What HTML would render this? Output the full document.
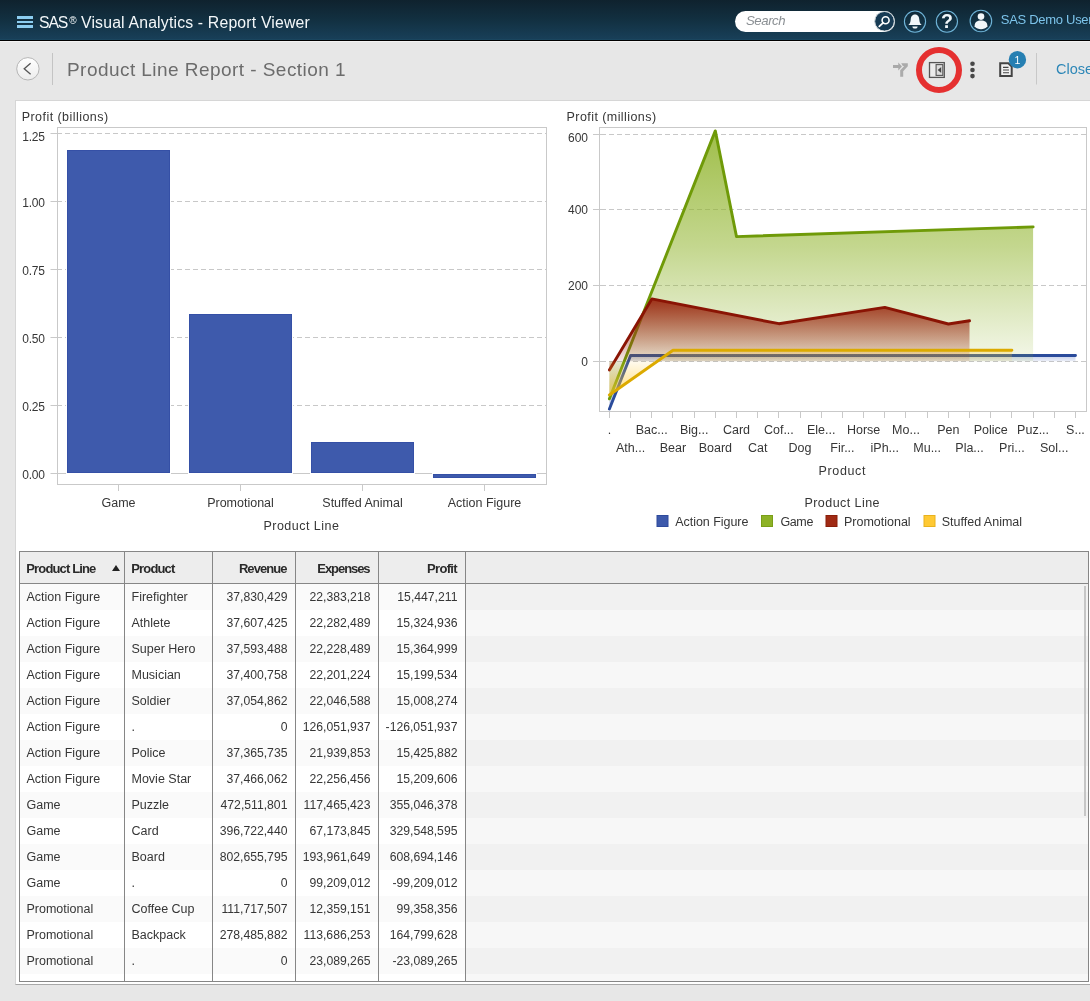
<!DOCTYPE html>
<html><head><meta charset="utf-8"><title>SAS Visual Analytics - Report Viewer</title>
<style>
html,body{margin:0;padding:0;}
body{width:1090px;height:1001px;overflow:hidden;background:#e7e7e7;position:relative;font-family:"Liberation Sans",sans-serif;}
.t{position:absolute;white-space:pre;line-height:1;font-family:"Liberation Sans",sans-serif;}
.a{position:absolute;}
svg{position:absolute;left:0;top:0;overflow:visible;}
#root{position:absolute;left:0;top:0;width:1090px;height:1001px;will-change:transform;}
</style></head><body><div id="root">

<div class="a" style="left:0;top:0;width:1090px;height:40px;background:linear-gradient(#0f222e 0%,#123041 50%,#183f58 97%,#1b4a63 100%);"></div>
<div class="a" style="left:0;top:40px;width:1090px;height:1px;background:#000;"></div><div class="a" style="left:0;top:41px;width:1090px;height:1px;background:#f3f3f3;z-index:1;"></div>
<div class="a" style="left:0;top:41px;width:1090px;height:59px;background:#e7e7e7;"></div>
<div class="a" style="left:17px;top:16px;width:16px;height:2.5px;background:#8ccdf0;"></div>
<div class="a" style="left:17px;top:20.5px;width:16px;height:2.5px;background:#8ccdf0;"></div>
<div class="a" style="left:17px;top:25px;width:16px;height:2.5px;background:#8ccdf0;"></div>
<div class="t" style="left:39.00px;top:14.53px;font-size:15.8px;color:#f4f8fa;letter-spacing:-1.139px;">SAS</div>
<div class="t" style="left:69.20px;top:15.83px;font-size:10px;color:#f4f8fa;">®</div>
<div class="t" style="left:81.00px;top:14.53px;font-size:15.8px;color:#f4f8fa;letter-spacing:0.176px;">Visual Analytics - Report Viewer</div>
<div class="a" style="left:735px;top:11px;width:160px;height:21px;border-radius:11px;background:#fff;"></div>
<div class="t" style="left:746.00px;top:14.43px;font-size:13.2px;color:#8a8f93;letter-spacing:-0.437px;font-style:italic;">Search</div>
<svg width="1090" height="1001" viewBox="0 0 1090 1001">
<circle cx="884.5" cy="21.3" r="9.8" fill="#173b54" stroke="#cfd6da" stroke-width="1"/>
<circle cx="885.6" cy="20.2" r="3.5" fill="none" stroke="#fff" stroke-width="1.6"/>
<line x1="883" y1="22.8" x2="879.3" y2="26.4" stroke="#fff" stroke-width="1.8" stroke-linecap="round"/>
<circle cx="915" cy="21.6" r="10.6" fill="none" stroke="#6fb4d8" stroke-width="1.1"/>
<path d="M915 14.600 c-3 0 -4.100 2.400 -4.300 5 c-0.200 2.600 -0.700 4.100 -2.400 5.500 h13.400 c-1.700 -1.400 -2.200 -2.900 -2.400 -5.500 c-0.200 -2.600 -1.300 -5 -4.300 -5 z" fill="#f2f7fa"/>
<path d="M912.300 26.400 h5.400 c-0.300 1.500 -1.300 2.200 -2.700 2.200 s-2.400 -0.700 -2.700 -2.200 z" fill="#f2f7fa"/>
<circle cx="946.9" cy="21.6" r="10.6" fill="none" stroke="#6fb4d8" stroke-width="1.1"/>
<circle cx="980.9" cy="21" r="10.8" fill="none" stroke="#6fb4d8" stroke-width="1.1"/>
<circle cx="981" cy="16.6" r="3.3" fill="#f2f7fa"/>
<path d="M974.6 26.2 c0 -4 2.6 -5.6 6.4 -5.6 s6.4 1.6 6.4 5.6 c-1.6 2.2 -4 3 -6.4 3 s-4.800 -0.800 -6.400 -3 z" fill="#f2f7fa"/>
</svg>
<div class="t" style="left:940.94px;top:11.79px;font-size:19.5px;color:#f2f7fa;font-weight:bold;">?</div>
<div class="t" style="left:1000.80px;top:13.10px;font-size:13px;color:#7cc3ea;letter-spacing:-0.297px;">SAS Demo User</div>
<svg width="1090" height="1001" viewBox="0 0 1090 1001">
<defs><linearGradient id="bk" x1="0" y1="0" x2="0" y2="1"><stop offset="0" stop-color="#ffffff"/><stop offset="1" stop-color="#ececec"/></linearGradient></defs>
<circle cx="27.9" cy="68.8" r="11.2" fill="url(#bk)" stroke="#b4b4b4" stroke-width="1"/>
<path d="M30.6 63.3 L24.2 68.8 L30.6 74.3" fill="none" stroke="#555" stroke-width="1.3"/>
<line x1="52.5" y1="53" x2="52.500" y2="85" stroke="#c4c4c4" stroke-width="1"/>
<!-- filter-arrow icon -->
<path d="M893 65 H898.300 V62.500 L902 66.500 L898.300 70.500 V68 H893 Z" fill="#a9a9a9"/>
<path d="M901.200 63.200 H907.800 V66.200 L903.200 71.300 V76.800 H900.200 V70.300 L904.200 66 H902.800 Z" fill="#ababab"/>
<!-- red highlight circle -->
<circle cx="939" cy="70" r="20" fill="none" stroke="#e53030" stroke-width="6"/>
<!-- panel icon -->
<rect x="929.500" y="62.600" width="14.800" height="14.800" fill="#ececec" stroke="#555" stroke-width="1.300"/>
<rect x="936.100" y="64.600" width="6.700" height="10.800" fill="#dcdcdc" stroke="#555" stroke-width="1.100"/>
<path d="M941.200 67.100 L937.700 70 L941.200 72.900 Z" fill="#444"/>
<!-- dots -->
<circle cx="972.500" cy="63.800" r="2.300" fill="#484848"/><circle cx="972.500" cy="70" r="2.300" fill="#484848"/><circle cx="972.500" cy="76.100" r="2.300" fill="#484848"/>
<!-- doc icon -->
<path d="M1000.200 63.300 H1008.300 L1011.700 66.500 V76 H1000.200 Z" fill="#f2f2f2" stroke="#444" stroke-width="2"/>
<path d="M1003 67.400 H1008.500 M1003 70 H1009 M1003 72.700 H1009" stroke="#444" stroke-width="1.100"/>
<circle cx="1017.400" cy="59.700" r="8.700" fill="#267fb2"/>
<line x1="1036.500" y1="53" x2="1036.500" y2="84.500" stroke="#c8c8c8" stroke-width="1"/>
</svg>
<div class="t" style="left:1014.38px;top:54.81px;font-size:10.5px;color:#fff;">1</div>
<div class="t" style="left:67.00px;top:59.62px;font-size:19px;color:#6c6c6c;letter-spacing:0.449px;">Product Line Report - Section 1</div>
<div class="t" style="left:1056.00px;top:62.43px;font-size:14.5px;color:#2d87b7;">Close</div>
<div class="a" style="left:15px;top:100px;width:1080px;height:885px;background:#fff;border:1px solid #d6d6d6;border-bottom-color:#a8a8a8;box-sizing:border-box;"></div>
<div class="t" style="left:21.70px;top:111.32px;font-size:12.5px;color:#363636;letter-spacing:0.448px;">Profit (billions)</div>
<svg width="1090" height="1001" viewBox="0 0 1090 1001" shape-rendering="auto">
<rect x="57.5" y="127.5" width="489" height="357" fill="#fff" stroke="#c9c9c9" stroke-width="1"/>
<line x1="50.5" y1="133.5" x2="61" y2="133.5" stroke="#c9c9c9" stroke-width="1"/>
<line x1="57" y1="133.5" x2="546" y2="133.5" stroke="#c8c8c8" stroke-width="1" stroke-dasharray="5 3"/>
<line x1="50.5" y1="201.5" x2="61" y2="201.5" stroke="#c9c9c9" stroke-width="1"/>
<line x1="57" y1="201.5" x2="546" y2="201.5" stroke="#c8c8c8" stroke-width="1" stroke-dasharray="5 3"/>
<line x1="50.5" y1="269.5" x2="61" y2="269.5" stroke="#c9c9c9" stroke-width="1"/>
<line x1="57" y1="269.5" x2="546" y2="269.5" stroke="#c8c8c8" stroke-width="1" stroke-dasharray="5 3"/>
<line x1="50.5" y1="337.5" x2="61" y2="337.5" stroke="#c9c9c9" stroke-width="1"/>
<line x1="57" y1="337.5" x2="546" y2="337.5" stroke="#c8c8c8" stroke-width="1" stroke-dasharray="5 3"/>
<line x1="50.5" y1="405.5" x2="61" y2="405.5" stroke="#c9c9c9" stroke-width="1"/>
<line x1="57" y1="405.5" x2="546" y2="405.5" stroke="#c8c8c8" stroke-width="1" stroke-dasharray="5 3"/>
<line x1="50.5" y1="473.5" x2="61" y2="473.5" stroke="#c9c9c9" stroke-width="1"/>
<line x1="57" y1="473.5" x2="546" y2="473.5" stroke="#c9c9c9" stroke-width="1"/>
<rect x="66" y="149" width="105" height="325" fill="#fff"/>
<rect x="67.5" y="150.5" width="102" height="322" fill="#3e5aac" stroke="#3550a6" stroke-width="1"/>
<rect x="188" y="313" width="105" height="161" fill="#fff"/>
<rect x="189.5" y="314.5" width="102" height="158" fill="#3e5aac" stroke="#3550a6" stroke-width="1"/>
<rect x="310" y="441" width="105" height="33" fill="#fff"/>
<rect x="311.5" y="442.5" width="102" height="30" fill="#3e5aac" stroke="#3550a6" stroke-width="1"/>
<rect x="432" y="473" width="105" height="6" fill="#fff"/>
<rect x="433.5" y="474.5" width="102" height="3" fill="#3e5aac" stroke="#3550a6" stroke-width="1"/>
<line x1="118.5" y1="484" x2="118.5" y2="491" stroke="#c9c9c9" stroke-width="1"/>
<line x1="240.5" y1="484" x2="240.5" y2="491" stroke="#c9c9c9" stroke-width="1"/>
<line x1="362.5" y1="484" x2="362.5" y2="491" stroke="#c9c9c9" stroke-width="1"/>
<line x1="484.5" y1="484" x2="484.5" y2="491" stroke="#c9c9c9" stroke-width="1"/>
</svg>
<div class="t" style="left:22.21px;top:131.04px;font-size:12px;color:#363636;letter-spacing:-0.189px;">1.25</div>
<div class="t" style="left:22.21px;top:196.64px;font-size:12px;color:#363636;letter-spacing:-0.189px;">1.00</div>
<div class="t" style="left:22.21px;top:264.64px;font-size:12px;color:#363636;letter-spacing:-0.189px;">0.75</div>
<div class="t" style="left:22.21px;top:332.64px;font-size:12px;color:#363636;letter-spacing:-0.189px;">0.50</div>
<div class="t" style="left:22.21px;top:400.64px;font-size:12px;color:#363636;letter-spacing:-0.189px;">0.25</div>
<div class="t" style="left:22.21px;top:468.64px;font-size:12px;color:#363636;letter-spacing:-0.189px;">0.00</div>
<div class="t" style="left:101.48px;top:497.32px;font-size:12.5px;color:#363636;">Game</div>
<div class="t" style="left:207.15px;top:497.32px;font-size:12.5px;color:#363636;">Promotional</div>
<div class="t" style="left:322.31px;top:497.32px;font-size:12.5px;color:#363636;">Stuffed Animal</div>
<div class="t" style="left:447.68px;top:497.32px;font-size:12.5px;color:#363636;">Action Figure</div>
<div class="t" style="left:263.44px;top:520.32px;font-size:12.5px;color:#363636;letter-spacing:0.485px;">Product Line</div>
<div class="t" style="left:566.60px;top:111.32px;font-size:12.5px;color:#363636;letter-spacing:0.427px;">Profit (millions)</div>
<svg width="1090" height="1001" viewBox="0 0 1090 1001">
<defs>
<clipPath id="cp2"><rect x="600" y="128" width="486" height="283"/></clipPath>
<linearGradient id="g_blue" gradientUnits="userSpaceOnUse" x1="0" y1="355.5" x2="0" y2="409.0"><stop offset="0" stop-color="#3d5db5" stop-opacity="0.3"/><stop offset="0.1083" stop-color="#3d5db5" stop-opacity="0.1"/><stop offset="1" stop-color="#3d5db5" stop-opacity="0.35"/></linearGradient>
<linearGradient id="g_green" gradientUnits="userSpaceOnUse" x1="0" y1="130.9" x2="0" y2="398.8"><stop offset="0" stop-color="#8fb32a" stop-opacity="0.85"/><stop offset="0.4299" stop-color="#8fb32a" stop-opacity="0.53"/><stop offset="0.8599" stop-color="#8fb32a" stop-opacity="0.1"/><stop offset="1" stop-color="#8fb32a" stop-opacity="0.3"/></linearGradient>
<linearGradient id="g_red" gradientUnits="userSpaceOnUse" x1="0" y1="298.9" x2="0" y2="370.0"><stop offset="0" stop-color="#9c2c14" stop-opacity="0.97"/><stop offset="0.8771" stop-color="#9c2c14" stop-opacity="0.1"/><stop offset="1" stop-color="#9c2c14" stop-opacity="0.45"/></linearGradient>
<linearGradient id="g_yellow" gradientUnits="userSpaceOnUse" x1="0" y1="350.3" x2="0" y2="395.0"><stop offset="0" stop-color="#ffc933" stop-opacity="0.34"/><stop offset="0.2458" stop-color="#ffc933" stop-opacity="0.08"/><stop offset="1" stop-color="#ffc933" stop-opacity="0.65"/></linearGradient>
</defs>
<rect x="599.5" y="127.5" width="487" height="284" fill="#fff" stroke="#c9c9c9" stroke-width="1"/>
<line x1="593" y1="134.5" x2="603" y2="134.5" stroke="#c9c9c9" stroke-width="1"/>
<line x1="601" y1="134.5" x2="1086" y2="134.5" stroke="#c8c8c8" stroke-width="1" stroke-dasharray="5 3"/>
<line x1="593" y1="209.5" x2="603" y2="209.5" stroke="#c9c9c9" stroke-width="1"/>
<line x1="601" y1="209.5" x2="1086" y2="209.5" stroke="#c8c8c8" stroke-width="1" stroke-dasharray="5 3"/>
<line x1="593" y1="285.5" x2="603" y2="285.5" stroke="#c9c9c9" stroke-width="1"/>
<line x1="601" y1="285.5" x2="1086" y2="285.5" stroke="#c8c8c8" stroke-width="1" stroke-dasharray="5 3"/>
<line x1="593" y1="361.5" x2="603" y2="361.5" stroke="#c9c9c9" stroke-width="1"/>
<line x1="601" y1="361.5" x2="1086" y2="361.5" stroke="#c8c8c8" stroke-width="1" stroke-dasharray="5 3"/>
<line x1="609.5" y1="411" x2="609.5" y2="418" stroke="#c9c9c9" stroke-width="1"/>
<line x1="630.5" y1="411" x2="630.5" y2="418" stroke="#c9c9c9" stroke-width="1"/>
<line x1="651.5" y1="411" x2="651.5" y2="418" stroke="#c9c9c9" stroke-width="1"/>
<line x1="672.5" y1="411" x2="672.5" y2="418" stroke="#c9c9c9" stroke-width="1"/>
<line x1="694.5" y1="411" x2="694.5" y2="418" stroke="#c9c9c9" stroke-width="1"/>
<line x1="715.5" y1="411" x2="715.5" y2="418" stroke="#c9c9c9" stroke-width="1"/>
<line x1="736.5" y1="411" x2="736.5" y2="418" stroke="#c9c9c9" stroke-width="1"/>
<line x1="757.5" y1="411" x2="757.5" y2="418" stroke="#c9c9c9" stroke-width="1"/>
<line x1="778.5" y1="411" x2="778.5" y2="418" stroke="#c9c9c9" stroke-width="1"/>
<line x1="800.5" y1="411" x2="800.5" y2="418" stroke="#c9c9c9" stroke-width="1"/>
<line x1="821.5" y1="411" x2="821.5" y2="418" stroke="#c9c9c9" stroke-width="1"/>
<line x1="842.5" y1="411" x2="842.5" y2="418" stroke="#c9c9c9" stroke-width="1"/>
<line x1="863.5" y1="411" x2="863.5" y2="418" stroke="#c9c9c9" stroke-width="1"/>
<line x1="884.5" y1="411" x2="884.5" y2="418" stroke="#c9c9c9" stroke-width="1"/>
<line x1="905.5" y1="411" x2="905.5" y2="418" stroke="#c9c9c9" stroke-width="1"/>
<line x1="927.5" y1="411" x2="927.5" y2="418" stroke="#c9c9c9" stroke-width="1"/>
<line x1="948.5" y1="411" x2="948.5" y2="418" stroke="#c9c9c9" stroke-width="1"/>
<line x1="969.5" y1="411" x2="969.5" y2="418" stroke="#c9c9c9" stroke-width="1"/>
<line x1="990.5" y1="411" x2="990.5" y2="418" stroke="#c9c9c9" stroke-width="1"/>
<line x1="1011.5" y1="411" x2="1011.5" y2="418" stroke="#c9c9c9" stroke-width="1"/>
<line x1="1033.5" y1="411" x2="1033.5" y2="418" stroke="#c9c9c9" stroke-width="1"/>
<line x1="1054.5" y1="411" x2="1054.5" y2="418" stroke="#c9c9c9" stroke-width="1"/>
<line x1="1075.5" y1="411" x2="1075.5" y2="418" stroke="#c9c9c9" stroke-width="1"/>
<path d="M609.4 409.0 L630.6 355.5 L1075.5 355.5 L1075.5 361.3 L609.4 361.3 Z" fill="url(#g_blue)" stroke="none"/>
<path d="M609.4 409.0 L630.6 355.5 L1075.5 355.5" fill="none" stroke="#2a4b9b" stroke-width="2.900" stroke-linejoin="round" stroke-linecap="round"/>
<path d="M609.4 398.8 L715.3 130.9 L736.5 236.6 L1033.1 226.9 L1033.1 361.3 L609.4 361.3 Z" fill="url(#g_green)" stroke="none"/>
<path d="M609.4 398.8 L715.3 130.9 L736.5 236.6 L1033.1 226.9" fill="none" stroke="#6f9a08" stroke-width="2.900" stroke-linejoin="round" stroke-linecap="round"/>
<path d="M609.4 370.0 L651.8 298.9 L778.9 323.7 L884.8 307.4 L948.4 324.0 L969.5 320.8 L969.5 361.3 L609.4 361.3 Z" fill="url(#g_red)" stroke="none"/>
<path d="M609.4 370.0 L651.8 298.9 L778.9 323.7 L884.8 307.4 L948.4 324.0 L969.5 320.8" fill="none" stroke="#8a1404" stroke-width="2.900" stroke-linejoin="round" stroke-linecap="round"/>
<path d="M609.4 395.0 L673.0 350.3 L1011.9 350.3 L1011.9 361.3 L609.4 361.3 Z" fill="url(#g_yellow)" stroke="none"/>
<path d="M609.4 395.0 L673.0 350.3 L1011.9 350.3" fill="none" stroke="#dcaa00" stroke-width="2.900" stroke-linejoin="round" stroke-linecap="round"/>
<rect x="657.0" y="515.500" width="11" height="11" fill="#3d59ab" stroke="#2e4a9c" stroke-width="1"/>
<rect x="761.5" y="515.500" width="11" height="11" fill="#8db226" stroke="#7a9e18" stroke-width="1"/>
<rect x="826.0" y="515.500" width="11" height="11" fill="#a02a14" stroke="#8a1e0a" stroke-width="1"/>
<rect x="924.0" y="515.500" width="11" height="11" fill="#ffc933" stroke="#e8b21e" stroke-width="1"/>
</svg>
<div class="t" style="left:567.98px;top:132.14px;font-size:12px;color:#363636;">600</div>
<div class="t" style="left:567.98px;top:204.34px;font-size:12px;color:#363636;">400</div>
<div class="t" style="left:567.98px;top:280.04px;font-size:12px;color:#363636;">200</div>
<div class="t" style="left:581.33px;top:355.74px;font-size:12px;color:#363636;">0</div>
<div class="t" style="left:607.66px;top:423.82px;font-size:12.5px;color:#363636;">.</div>
<div class="t" style="left:615.99px;top:441.92px;font-size:12.5px;color:#363636;">Ath...</div>
<div class="t" style="left:635.79px;top:423.82px;font-size:12.5px;color:#363636;">Bac...</div>
<div class="t" style="left:659.75px;top:441.92px;font-size:12.5px;color:#363636;">Bear</div>
<div class="t" style="left:679.90px;top:423.82px;font-size:12.5px;color:#363636;">Big...</div>
<div class="t" style="left:698.65px;top:441.92px;font-size:12.5px;color:#363636;">Board</div>
<div class="t" style="left:722.96px;top:423.82px;font-size:12.5px;color:#363636;">Card</div>
<div class="t" style="left:747.97px;top:441.92px;font-size:12.5px;color:#363636;">Cat</div>
<div class="t" style="left:763.94px;top:423.82px;font-size:12.5px;color:#363636;">Cof...</div>
<div class="t" style="left:788.60px;top:441.92px;font-size:12.5px;color:#363636;">Dog</div>
<div class="t" style="left:807.01px;top:423.82px;font-size:12.5px;color:#363636;">Ele...</div>
<div class="t" style="left:830.28px;top:441.92px;font-size:12.5px;color:#363636;">Fir...</div>
<div class="t" style="left:846.95px;top:423.82px;font-size:12.5px;color:#363636;">Horse</div>
<div class="t" style="left:870.56px;top:441.92px;font-size:12.5px;color:#363636;">iPh...</div>
<div class="t" style="left:892.10px;top:423.82px;font-size:12.5px;color:#363636;">Mo...</div>
<div class="t" style="left:913.28px;top:441.92px;font-size:12.5px;color:#363636;">Mu...</div>
<div class="t" style="left:937.24px;top:423.82px;font-size:12.5px;color:#363636;">Pen</div>
<div class="t" style="left:955.30px;top:441.92px;font-size:12.5px;color:#363636;">Pla...</div>
<div class="t" style="left:973.71px;top:423.82px;font-size:12.5px;color:#363636;">Police</div>
<div class="t" style="left:999.07px;top:441.92px;font-size:12.5px;color:#363636;">Pri...</div>
<div class="t" style="left:1017.12px;top:423.82px;font-size:12.5px;color:#363636;">Puz...</div>
<div class="t" style="left:1040.04px;top:441.92px;font-size:12.5px;color:#363636;">Sol...</div>
<div class="t" style="left:1066.09px;top:423.82px;font-size:12.5px;color:#363636;">S...</div>
<div class="t" style="left:818.48px;top:465.32px;font-size:12.5px;color:#363636;letter-spacing:0.660px;">Product</div>
<div class="t" style="left:804.47px;top:496.82px;font-size:12.5px;color:#363636;letter-spacing:0.443px;">Product Line</div>
<div class="t" style="left:675.30px;top:516.32px;font-size:12.5px;color:#363636;letter-spacing:-0.050px;">Action Figure</div>
<div class="t" style="left:780.40px;top:516.32px;font-size:12.5px;color:#363636;letter-spacing:-0.360px;">Game</div>
<div class="t" style="left:844.00px;top:516.32px;font-size:12.5px;color:#363636;letter-spacing:-0.009px;">Promotional</div>
<div class="t" style="left:941.80px;top:516.32px;font-size:12.5px;color:#363636;letter-spacing:-0.013px;">Stuffed Animal</div>
<div class="a" style="left:19px;top:551px;width:1070px;height:431px;box-sizing:border-box;border:1px solid #868686;background:#f7f7f7;"></div>
<div class="a" style="left:20px;top:552px;width:1068px;height:31px;background:#ededed;"></div>
<div class="a" style="left:20px;top:583px;width:1068px;height:1px;background:#868686;"></div>
<div class="a" style="left:20px;top:584px;width:445px;height:26px;background:#fafafa;"></div>
<div class="a" style="left:466px;top:584px;width:622px;height:26px;background:#f1f1f1;"></div>
<div class="a" style="left:20px;top:610px;width:445px;height:26px;background:#ffffff;"></div>
<div class="a" style="left:466px;top:610px;width:622px;height:26px;background:#f7f7f7;"></div>
<div class="a" style="left:20px;top:636px;width:445px;height:26px;background:#fafafa;"></div>
<div class="a" style="left:466px;top:636px;width:622px;height:26px;background:#f1f1f1;"></div>
<div class="a" style="left:20px;top:662px;width:445px;height:26px;background:#ffffff;"></div>
<div class="a" style="left:466px;top:662px;width:622px;height:26px;background:#f7f7f7;"></div>
<div class="a" style="left:20px;top:688px;width:445px;height:26px;background:#fafafa;"></div>
<div class="a" style="left:466px;top:688px;width:622px;height:26px;background:#f1f1f1;"></div>
<div class="a" style="left:20px;top:714px;width:445px;height:26px;background:#ffffff;"></div>
<div class="a" style="left:466px;top:714px;width:622px;height:26px;background:#f7f7f7;"></div>
<div class="a" style="left:20px;top:740px;width:445px;height:26px;background:#fafafa;"></div>
<div class="a" style="left:466px;top:740px;width:622px;height:26px;background:#f1f1f1;"></div>
<div class="a" style="left:20px;top:766px;width:445px;height:26px;background:#ffffff;"></div>
<div class="a" style="left:466px;top:766px;width:622px;height:26px;background:#f7f7f7;"></div>
<div class="a" style="left:20px;top:792px;width:445px;height:26px;background:#fafafa;"></div>
<div class="a" style="left:466px;top:792px;width:622px;height:26px;background:#f1f1f1;"></div>
<div class="a" style="left:20px;top:818px;width:445px;height:26px;background:#ffffff;"></div>
<div class="a" style="left:466px;top:818px;width:622px;height:26px;background:#f7f7f7;"></div>
<div class="a" style="left:20px;top:844px;width:445px;height:26px;background:#fafafa;"></div>
<div class="a" style="left:466px;top:844px;width:622px;height:26px;background:#f1f1f1;"></div>
<div class="a" style="left:20px;top:870px;width:445px;height:26px;background:#ffffff;"></div>
<div class="a" style="left:466px;top:870px;width:622px;height:26px;background:#f7f7f7;"></div>
<div class="a" style="left:20px;top:896px;width:445px;height:26px;background:#fafafa;"></div>
<div class="a" style="left:466px;top:896px;width:622px;height:26px;background:#f1f1f1;"></div>
<div class="a" style="left:20px;top:922px;width:445px;height:26px;background:#ffffff;"></div>
<div class="a" style="left:466px;top:922px;width:622px;height:26px;background:#f7f7f7;"></div>
<div class="a" style="left:20px;top:948px;width:445px;height:26px;background:#fafafa;"></div>
<div class="a" style="left:466px;top:948px;width:622px;height:26px;background:#f1f1f1;"></div>
<div class="a" style="left:20px;top:974px;width:445px;height:7px;background:#ffffff;"></div>
<div class="a" style="left:466px;top:974px;width:622px;height:7px;background:#f7f7f7;"></div>
<div class="a" style="left:124px;top:552px;width:1px;height:429px;background:#868686;"></div>
<div class="a" style="left:212px;top:552px;width:1px;height:429px;background:#868686;"></div>
<div class="a" style="left:295px;top:552px;width:1px;height:429px;background:#868686;"></div>
<div class="a" style="left:378px;top:552px;width:1px;height:429px;background:#868686;"></div>
<div class="a" style="left:465px;top:552px;width:1px;height:429px;background:#868686;"></div>
<div class="a" style="left:1084px;top:586px;width:2px;height:230px;background:#c6c6c6;"></div>
<div class="t" style="left:26.30px;top:561.60px;font-size:13px;color:#2a2a2a;letter-spacing:-0.854px;font-weight:bold;">Product Line</div>
<div class="t" style="left:131.30px;top:561.60px;font-size:13px;color:#2a2a2a;letter-spacing:-0.845px;font-weight:bold;">Product</div>
<div class="t" style="left:238.89px;top:561.60px;font-size:13px;color:#2a2a2a;letter-spacing:-0.913px;font-weight:bold;">Revenue</div>
<div class="t" style="left:317.34px;top:561.60px;font-size:13px;color:#2a2a2a;letter-spacing:-1.063px;font-weight:bold;">Expenses</div>
<div class="t" style="left:427.11px;top:561.60px;font-size:13px;color:#2a2a2a;letter-spacing:-0.690px;font-weight:bold;">Profit</div>
<svg width="1090" height="1001" viewBox="0 0 1090 1001"><path d="M112 571 L116 565 L120 571 Z" fill="#222"/></svg>
<div class="t" style="left:26.50px;top:590.92px;font-size:12.5px;color:#363636;">Action Figure</div>
<div class="t" style="left:131.50px;top:590.92px;font-size:12.5px;color:#363636;">Firefighter</div>
<div class="t" style="left:226.44px;top:591.17px;font-size:12.2px;color:#363636;">37,830,429</div>
<div class="t" style="left:309.44px;top:591.17px;font-size:12.2px;color:#363636;">22,383,218</div>
<div class="t" style="left:397.35px;top:591.17px;font-size:12.2px;color:#363636;">15,447,211</div>
<div class="t" style="left:26.50px;top:616.92px;font-size:12.5px;color:#363636;">Action Figure</div>
<div class="t" style="left:131.50px;top:616.92px;font-size:12.5px;color:#363636;">Athlete</div>
<div class="t" style="left:226.44px;top:617.17px;font-size:12.2px;color:#363636;">37,607,425</div>
<div class="t" style="left:309.44px;top:617.17px;font-size:12.2px;color:#363636;">22,282,489</div>
<div class="t" style="left:396.44px;top:617.17px;font-size:12.2px;color:#363636;">15,324,936</div>
<div class="t" style="left:26.50px;top:642.92px;font-size:12.5px;color:#363636;">Action Figure</div>
<div class="t" style="left:131.50px;top:642.92px;font-size:12.5px;color:#363636;">Super Hero</div>
<div class="t" style="left:226.44px;top:643.17px;font-size:12.2px;color:#363636;">37,593,488</div>
<div class="t" style="left:309.44px;top:643.17px;font-size:12.2px;color:#363636;">22,228,489</div>
<div class="t" style="left:396.44px;top:643.17px;font-size:12.2px;color:#363636;">15,364,999</div>
<div class="t" style="left:26.50px;top:668.92px;font-size:12.5px;color:#363636;">Action Figure</div>
<div class="t" style="left:131.50px;top:668.92px;font-size:12.5px;color:#363636;">Musician</div>
<div class="t" style="left:226.44px;top:669.17px;font-size:12.2px;color:#363636;">37,400,758</div>
<div class="t" style="left:309.44px;top:669.17px;font-size:12.2px;color:#363636;">22,201,224</div>
<div class="t" style="left:396.44px;top:669.17px;font-size:12.2px;color:#363636;">15,199,534</div>
<div class="t" style="left:26.50px;top:694.92px;font-size:12.5px;color:#363636;">Action Figure</div>
<div class="t" style="left:131.50px;top:694.92px;font-size:12.5px;color:#363636;">Soldier</div>
<div class="t" style="left:226.44px;top:695.17px;font-size:12.2px;color:#363636;">37,054,862</div>
<div class="t" style="left:309.44px;top:695.17px;font-size:12.2px;color:#363636;">22,046,588</div>
<div class="t" style="left:396.44px;top:695.17px;font-size:12.2px;color:#363636;">15,008,274</div>
<div class="t" style="left:26.50px;top:720.92px;font-size:12.5px;color:#363636;">Action Figure</div>
<div class="t" style="left:131.50px;top:720.92px;font-size:12.5px;color:#363636;">.</div>
<div class="t" style="left:280.71px;top:721.17px;font-size:12.2px;color:#363636;">0</div>
<div class="t" style="left:302.66px;top:721.17px;font-size:12.2px;color:#363636;">126,051,937</div>
<div class="t" style="left:385.59px;top:721.17px;font-size:12.2px;color:#363636;">-126,051,937</div>
<div class="t" style="left:26.50px;top:746.92px;font-size:12.5px;color:#363636;">Action Figure</div>
<div class="t" style="left:131.50px;top:746.92px;font-size:12.5px;color:#363636;">Police</div>
<div class="t" style="left:226.44px;top:747.17px;font-size:12.2px;color:#363636;">37,365,735</div>
<div class="t" style="left:309.44px;top:747.17px;font-size:12.2px;color:#363636;">21,939,853</div>
<div class="t" style="left:396.44px;top:747.17px;font-size:12.2px;color:#363636;">15,425,882</div>
<div class="t" style="left:26.50px;top:772.92px;font-size:12.5px;color:#363636;">Action Figure</div>
<div class="t" style="left:131.50px;top:772.92px;font-size:12.5px;color:#363636;">Movie Star</div>
<div class="t" style="left:226.44px;top:773.17px;font-size:12.2px;color:#363636;">37,466,062</div>
<div class="t" style="left:309.44px;top:773.17px;font-size:12.2px;color:#363636;">22,256,456</div>
<div class="t" style="left:396.44px;top:773.17px;font-size:12.2px;color:#363636;">15,209,606</div>
<div class="t" style="left:26.50px;top:798.92px;font-size:12.5px;color:#363636;">Game</div>
<div class="t" style="left:131.50px;top:798.92px;font-size:12.5px;color:#363636;">Puzzle</div>
<div class="t" style="left:220.56px;top:799.17px;font-size:12.2px;color:#363636;">472,511,801</div>
<div class="t" style="left:303.56px;top:799.17px;font-size:12.2px;color:#363636;">117,465,423</div>
<div class="t" style="left:389.66px;top:799.17px;font-size:12.2px;color:#363636;">355,046,378</div>
<div class="t" style="left:26.50px;top:824.92px;font-size:12.5px;color:#363636;">Game</div>
<div class="t" style="left:131.50px;top:824.92px;font-size:12.5px;color:#363636;">Card</div>
<div class="t" style="left:219.66px;top:825.17px;font-size:12.2px;color:#363636;">396,722,440</div>
<div class="t" style="left:309.44px;top:825.17px;font-size:12.2px;color:#363636;">67,173,845</div>
<div class="t" style="left:389.66px;top:825.17px;font-size:12.2px;color:#363636;">329,548,595</div>
<div class="t" style="left:26.50px;top:850.92px;font-size:12.5px;color:#363636;">Game</div>
<div class="t" style="left:131.50px;top:850.92px;font-size:12.5px;color:#363636;">Board</div>
<div class="t" style="left:219.66px;top:851.17px;font-size:12.2px;color:#363636;">802,655,795</div>
<div class="t" style="left:302.66px;top:851.17px;font-size:12.2px;color:#363636;">193,961,649</div>
<div class="t" style="left:389.66px;top:851.17px;font-size:12.2px;color:#363636;">608,694,146</div>
<div class="t" style="left:26.50px;top:876.92px;font-size:12.5px;color:#363636;">Game</div>
<div class="t" style="left:131.50px;top:876.92px;font-size:12.5px;color:#363636;">.</div>
<div class="t" style="left:280.71px;top:877.17px;font-size:12.2px;color:#363636;">0</div>
<div class="t" style="left:309.44px;top:877.17px;font-size:12.2px;color:#363636;">99,209,012</div>
<div class="t" style="left:392.38px;top:877.17px;font-size:12.2px;color:#363636;">-99,209,012</div>
<div class="t" style="left:26.50px;top:902.92px;font-size:12.5px;color:#363636;">Promotional</div>
<div class="t" style="left:131.50px;top:902.92px;font-size:12.5px;color:#363636;">Coffee Cup</div>
<div class="t" style="left:221.47px;top:903.17px;font-size:12.2px;color:#363636;">111,717,507</div>
<div class="t" style="left:309.44px;top:903.17px;font-size:12.2px;color:#363636;">12,359,151</div>
<div class="t" style="left:396.44px;top:903.17px;font-size:12.2px;color:#363636;">99,358,356</div>
<div class="t" style="left:26.50px;top:928.92px;font-size:12.5px;color:#363636;">Promotional</div>
<div class="t" style="left:131.50px;top:928.92px;font-size:12.5px;color:#363636;">Backpack</div>
<div class="t" style="left:219.66px;top:929.17px;font-size:12.2px;color:#363636;">278,485,882</div>
<div class="t" style="left:303.56px;top:929.17px;font-size:12.2px;color:#363636;">113,686,253</div>
<div class="t" style="left:389.66px;top:929.17px;font-size:12.2px;color:#363636;">164,799,628</div>
<div class="t" style="left:26.50px;top:954.92px;font-size:12.5px;color:#363636;">Promotional</div>
<div class="t" style="left:131.50px;top:954.92px;font-size:12.5px;color:#363636;">.</div>
<div class="t" style="left:280.71px;top:955.17px;font-size:12.2px;color:#363636;">0</div>
<div class="t" style="left:309.44px;top:955.17px;font-size:12.2px;color:#363636;">23,089,265</div>
<div class="t" style="left:392.38px;top:955.17px;font-size:12.2px;color:#363636;">-23,089,265</div>
</div></body></html>
